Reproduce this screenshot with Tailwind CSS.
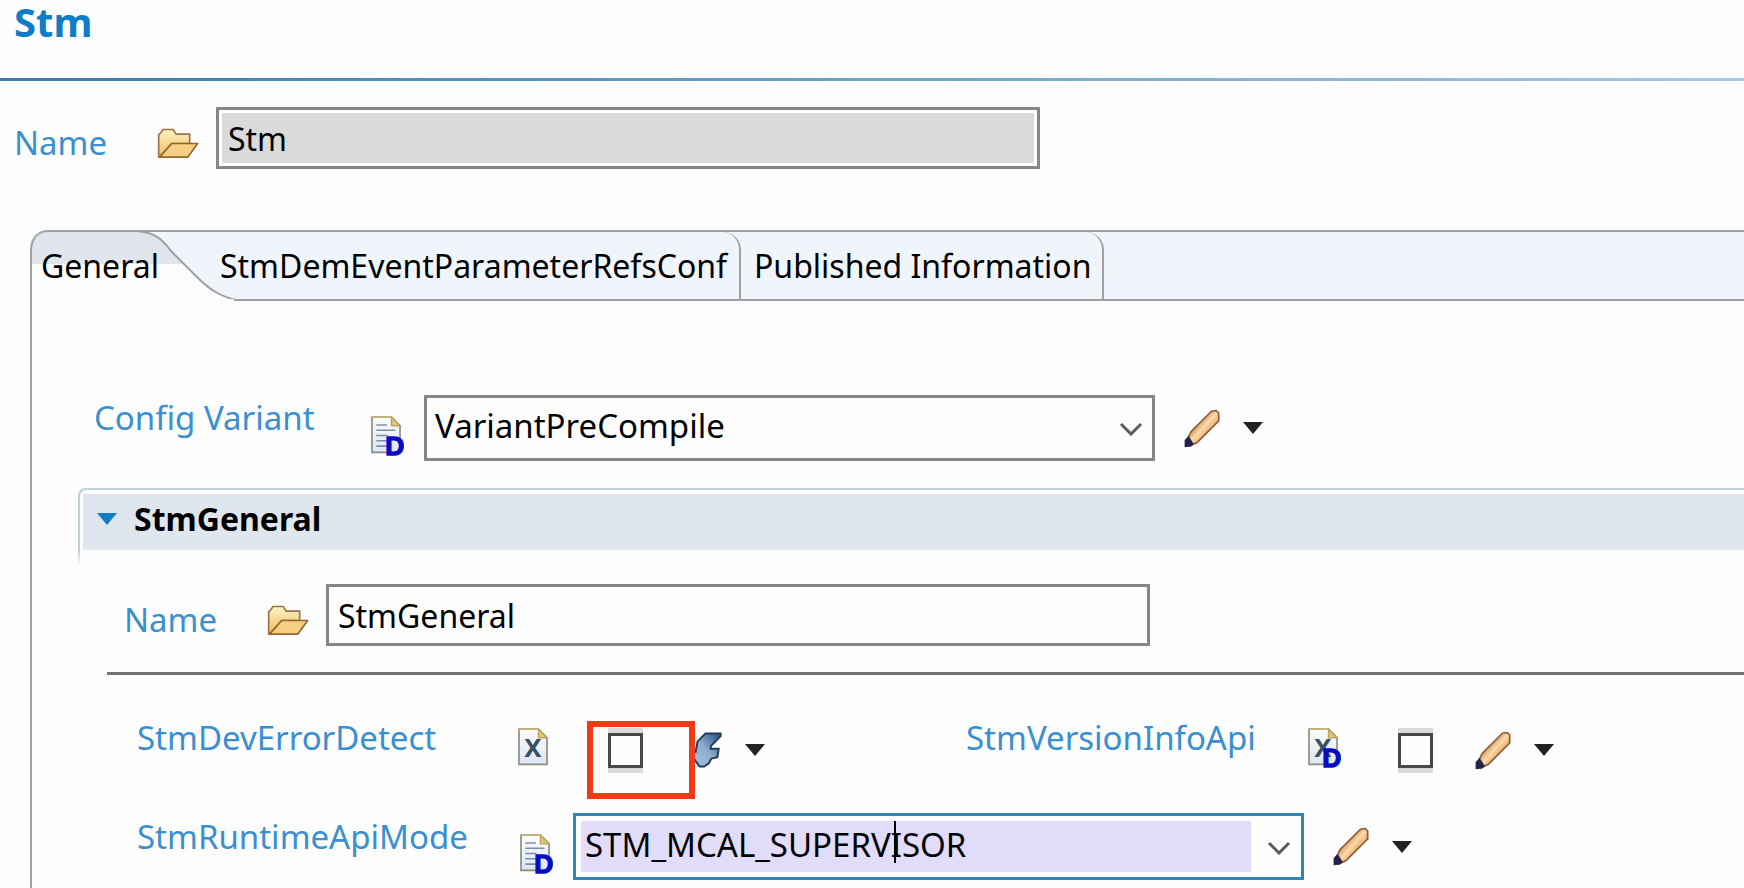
<!DOCTYPE html>
<html lang="en">
<head>
  <meta charset="UTF-8" />
  <meta name="viewport" content="width=device-width, initial-scale=1.0"/>
  <title>Stm</title>
  <script src="https://cdn.jsdelivr.net/npm/@tailwindcss/browser@4"></script>
</head>
<body class="flex min-h-screen flex-col overflow-hidden bg-[#fdfdfd] font-['Noto_Sans',sans-serif] text-[33px] leading-[44px] text-black">

  <!-- Icons -->
  <svg class="absolute size-0">
    <defs>
      <linearGradient id="folder-fill" x1="0" y1="0" x2="0" y2="1">
        <stop offset="0" stop-color="#fdf3c4"/><stop offset="1" stop-color="#eebd62"/>
      </linearGradient>
      <linearGradient id="pencil-fill" x1="0" y1="0" x2="1" y2="1">
        <stop offset="0.3" stop-color="#c98a4e"/><stop offset="0.5" stop-color="#fbd9ab"/><stop offset="0.7" stop-color="#e39a50"/>
      </linearGradient>
      <linearGradient id="paper-fill" x1="0" y1="0" x2="0" y2="1">
        <stop offset="0" stop-color="#fdfdf8"/><stop offset="1" stop-color="#dbe6f6"/>
      </linearGradient>
      <linearGradient id="bolt-fill" x1="1" y1="0" x2="0" y2="1">
        <stop offset="0" stop-color="#1f4f7c"/><stop offset="0.5" stop-color="#8fafd0"/><stop offset="1" stop-color="#a9c3e0"/>
      </linearGradient>
    </defs>
    <symbol id="folder" viewBox="0 0 126 92">
      <path d="M5 86V20L12 13L18 4H48L58 18H98V46H44L8 86Z" fill="url(#folder-fill)" stroke="#9a7440" stroke-width="5"/>
      <path d="M44 46H122L92 87H8Z" fill="#f6cf83" stroke="#94692f" stroke-width="5" stroke-linejoin="round"/>
    </symbol>
    <symbol id="paper" viewBox="0 0 100 124">
      <path d="M3 3H62L88 30V110H3Z" fill="url(#paper-fill)" stroke="#8b8b80" stroke-width="5"/>
      <path d="M62 3L88 30H62Z" fill="#e3c678" stroke="#b9a160" stroke-width="4"/>
      <path d="M3 3H62" stroke="#c9b678" stroke-width="5"/>
    </symbol>
    <symbol id="lines" viewBox="0 0 100 124">
      <path d="M16 27H48M16 43H74M16 59H50M16 75H50M16 91H50" stroke="#7d8db0" stroke-width="5"/>
    </symbol>
    <symbol id="pencil" viewBox="0 0 110 118">
      <path d="M10 92L22 68L84 6L98 4L106 12V36L40 102L18 112Z" fill="url(#pencil-fill)" stroke="#8a5a34" stroke-width="5"/>
      <path d="M2 116V94L14 82L30 106L22 114Z" fill="#23234a"/>
    </symbol>
    <symbol id="bolt" viewBox="0 0 100 108">
      <path d="M50 4H96V12L66 42V50H90L86 76L68 80L60 94L46 104H32L6 68V60H20L26 28Z" fill="url(#bolt-fill)" stroke="#1f3e5c" stroke-width="6"/>
    </symbol>
    <symbol id="chevron" viewBox="0 0 24 14">
      <path d="M2 2L12 12L22 2" fill="none" stroke="#5c5c5c" stroke-width="3"/>
    </symbol>
    <symbol id="arrow" viewBox="0 0 20 12">
      <path d="M0 0H20L10 12Z" fill="currentColor"/>
    </symbol>
  </svg>

  <header>
    <h1 class="pb-[34px] pl-[14px] text-[40px] leading-[44px] font-bold text-[#0f7cc9]">Stm</h1>
    <div class="h-[3px] bg-linear-to-r from-[#3d7ba6] to-[#a5cbe0]"></div>
  </header>

  <!-- Module name -->
  <div class="mt-[26px] flex items-center pl-[14px]">
    <label for="module-name" class="w-[143px] pt-[10px] text-[#3a8fd0]">Name</label>
    <svg class="mt-[10px] mr-[17px] h-[31px] w-[42px]"><use href="#folder"/></svg>
    <input id="module-name" type="text" value="Stm" readonly class="h-[62px] w-[824px] border-3 border-[#868686] bg-[#dadada] px-[9px] text-[32px] outline-none ring-3 ring-white ring-inset">
  </div>

  <!-- Tabs -->
  <main class="mt-[61px] ml-[30px] flex grow flex-col">
    <nav class="relative flex h-[71px] overflow-hidden rounded-tl-[18px] border-y-2 border-[#a0a0a0] bg-[#f0f5fc] text-[32px]">
      <svg class="absolute -top-[2px] left-0 h-[71px] w-[210px]" viewBox="0 0 210 71">
        <path d="M0 0H108C128 3 134 12 142 22L168 48C180 60 190 66 206 70V71H0Z" fill="#fdfdfd"/>
        <path d="M0 0H108C128 3 134 12 142 22L154 34H0Z" fill="#e0e5ee"/>
        <path d="M1 71V20Q2 1 20 1H108C128 3 134 12 142 22L168 48C180 60 190 66 206 70" fill="none" stroke="#a0a0a0" stroke-width="2"/>
      </svg>
      <button class="relative w-[190px] pl-[11px] text-left">General</button>
      <button class="w-[521px] rounded-tr-[18px] border-r-2 border-[#a0a0a0] text-left">StmDemEventParameterRefsConf</button>
      <button class="w-[363px] rounded-tr-[18px] border-r-2 border-[#a0a0a0] pl-[13px] text-left">Published Information</button>
    </nav>
    <!-- hides the strip's lower border under the open tab -->
    <div class="relative -mt-[2px] ml-[2px] h-[2px] w-[202px] bg-[#fdfdfd]"></div>

    <div class="-mt-[2px] grow border-l-2 border-[#a0a0a0] pt-[96px]">
      <div class="flex items-center pl-[62px]">
        <label for="config-variant" class="w-[277px] pb-5 text-[#3a8fd0]">Config Variant</label>
        <svg class="mt-4 mr-5 h-[41px] w-[33px]" viewBox="0 0 100 124">
          <use href="#paper" width="100" height="124"/>
          <use href="#lines" width="100" height="124"/>
          <text x="43" y="118" font-family="Liberation Sans, sans-serif" font-weight="bold" font-size="80" fill="#0a0ac4" stroke="#0a0ac4" stroke-width="4">D</text>
        </svg>
        <div class="relative">
          <select id="config-variant" class="h-[66px] w-[731px] appearance-none border-3 border-[#868686] bg-[#fdfdfd] pb-1 pl-2">
            <option>VariantPreCompile</option>
          </select>
          <svg class="pointer-events-none absolute top-[27px] right-[12px] h-[14px] w-[24px]"><use href="#chevron"/></svg>
        </div>
        <button class="ml-[29px] flex items-center gap-[23px] text-[#222]" aria-label="Edit Config Variant">
          <svg class="h-[39px] w-[36px]"><use href="#pencil"/></svg>
          <svg class="h-[12px] w-[20px]"><use href="#arrow"/></svg>
        </button>
      </div>

      <!-- StmGeneral -->
      <section class="mt-[27px] ml-[46px]">
        <div class="rounded-tl-lg border-t-2 border-l-2 border-[#bccfdb] pt-1 pl-[3px]">
          <h2 class="flex h-[56px] items-center gap-4 bg-[#dfe6ee] pb-[6px] pl-[13px] text-[32px] font-bold">
            <svg class="h-[12px] w-[22px] text-[#147cc4]"><use href="#arrow"/></svg>
            StmGeneral
          </h2>
        </div>
        <div class="h-[16px] w-[2px] bg-linear-to-b from-[#bccfdb] to-transparent"></div>

        <div class="mt-[18px] flex items-center pl-[46px]">
          <label for="container-name" class="w-[143px] pt-[10px] text-[#3a8fd0]">Name</label>
          <svg class="mt-[10px] mr-[17px] h-[31px] w-[42px]"><use href="#folder"/></svg>
          <input id="container-name" type="text" value="StmGeneral" class="h-[62px] w-[824px] border-3 border-[#868686] bg-[#fdfdfd] px-[9px] text-[32px] outline-none">
        </div>

        <hr class="mt-[26px] ml-[29px] border-t-3 border-[#747474]">

        <div class="mt-[45px] flex h-[60px] items-center pl-[59px]">
          <label for="dev-error-detect" class="w-[381px] pb-6 text-[#3a8fd0]">StmDevErrorDetect</label>
          <svg class="mr-[57px] mb-1 h-[41px] w-[33px]" viewBox="0 0 100 124">
            <use href="#paper" width="100" height="124"/>
            <text x="45" y="88" text-anchor="middle" font-family="Noto Sans, sans-serif" font-weight="bold" font-size="78" fill="#3b5068">X</text>
          </svg>
          <div class="relative bg-[#dadada] py-[5px]">
            <input id="dev-error-detect" type="checkbox" class="block size-[35px] appearance-none border-3 border-[#484848] bg-[#fdfdfd]">
            <div class="pointer-events-none absolute -top-[7px] -left-[21px] z-10 h-[78px] w-[108px] border-6 border-[#f03c14]"></div>
          </div>
          <button class="ml-[46px] flex items-center gap-[23px] text-[#222]" aria-label="Edit StmDevErrorDetect">
            <svg class="h-[36px] w-[33px]"><use href="#bolt"/></svg>
            <svg class="h-[12px] w-[20px]"><use href="#arrow"/></svg>
          </button>
          <label for="version-info-api" class="ml-[201px] w-[342px] pb-6 text-[#3a8fd0]">StmVersionInfoApi</label>
          <svg class="mr-[57px] mb-1 h-[41px] w-[33px]" viewBox="0 0 100 124">
            <use href="#paper" width="100" height="124"/>
            <text x="45" y="88" text-anchor="middle" font-family="Noto Sans, sans-serif" font-weight="bold" font-size="78" fill="#3b5068">X</text>
            <text x="43" y="118" font-family="Liberation Sans, sans-serif" font-weight="bold" font-size="80" fill="#0a0ac4" stroke="#0a0ac4" stroke-width="4">D</text>
          </svg>
          <div class="bg-[#dadada] py-[5px]">
            <input id="version-info-api" type="checkbox" class="block size-[35px] appearance-none border-3 border-[#484848] bg-[#fdfdfd]">
          </div>
          <button class="ml-[42px] flex items-center gap-[23px] text-[#222]" aria-label="Edit StmVersionInfoApi">
            <svg class="h-[39px] w-[36px]"><use href="#pencil"/></svg>
            <svg class="h-[12px] w-[20px]"><use href="#arrow"/></svg>
          </button>
        </div>

        <div class="mt-[33px] flex items-center pl-[59px]">
          <label for="runtime-api-mode" class="w-[383px] pb-5 text-[#3a8fd0]">StmRuntimeApiMode</label>
          <svg class="mt-4 mr-5 h-[41px] w-[33px]" viewBox="0 0 100 124">
            <use href="#paper" width="100" height="124"/>
            <use href="#lines" width="100" height="124"/>
            <text x="43" y="118" font-family="Liberation Sans, sans-serif" font-weight="bold" font-size="80" fill="#0a0ac4" stroke="#0a0ac4" stroke-width="4">D</text>
          </svg>
          <div class="relative border-3 border-[#2f86bd] bg-[#fdfdfd] py-[5px] pr-[50px] pl-[5px]">
            <select id="runtime-api-mode" class="block h-[51px] w-[670px] appearance-none bg-[#e0dcfa] pb-1 pl-1">
              <option>STM_MCAL_SUPERVISOR</option>
            </select>
            <!-- text cursor -->
            <span class="absolute top-[5px] left-[318px] h-[42px] w-[2px] bg-black"></span>
            <svg class="pointer-events-none absolute top-[25px] right-[10px] h-[14px] w-[24px]"><use href="#chevron"/></svg>
          </div>
          <button class="ml-[29px] flex items-center gap-[23px] text-[#222]" aria-label="Edit StmRuntimeApiMode">
            <svg class="h-[39px] w-[36px]"><use href="#pencil"/></svg>
            <svg class="h-[12px] w-[20px]"><use href="#arrow"/></svg>
          </button>
        </div>
      </section>
    </div>
  </main>

</body>
</html>
